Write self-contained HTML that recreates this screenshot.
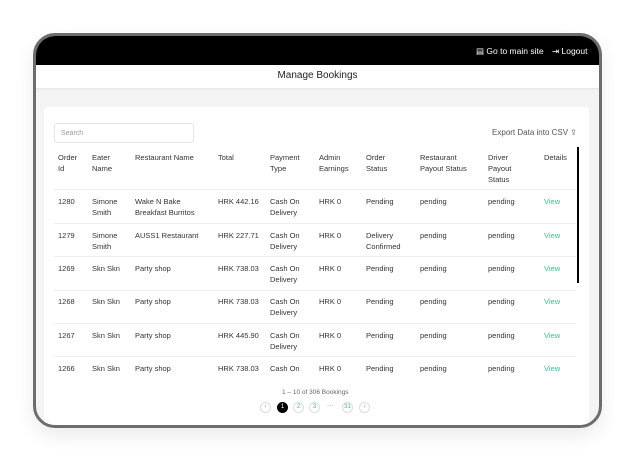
<!DOCTYPE html><html><head><style>
*{margin:0;padding:0;box-sizing:border-box}
body{width:635px;height:461px;background:#fff;font-family:"Liberation Sans",sans-serif;position:relative;overflow:hidden;color:#333}
.frame{position:absolute;left:33px;top:33px;width:569px;height:395px;border:3px solid #6d6d6d;border-radius:22px;background:#f4f4f5;overflow:hidden;box-shadow:0 8px 20px rgba(0,0,0,.08)}
.top{position:absolute;left:0;top:0;right:0;height:29px;background:#000;color:#fff;font-size:8.5px}
.top span{position:absolute;top:10px}
.title{position:absolute;left:0;right:0;top:29px;height:23px;background:#fff;font-size:10px;text-align:center;line-height:22px;color:#222;box-shadow:0 1px 2px rgba(0,0,0,.08)}
.card{position:absolute;left:8px;top:71px;width:545px;height:330px;background:#fff;border-radius:4px}
.search{position:absolute;left:10px;top:16px;width:140px;height:20px;border:1px solid #e3e3e3;border-radius:3px;font-size:7px;color:#999;padding:6px 6px}
.exp{position:absolute;right:12px;top:21px;font-size:8px;color:#555}
.c{position:absolute;font-size:7.5px;line-height:11px;color:#333}
.v{color:#3cc08f}
.ln{position:absolute;left:10px;width:522px;height:1px;background:#eee}
.sb{position:absolute;left:533px;top:40px;width:2px;height:136px;background:#000}
.pg{position:absolute;font-size:6.5px;color:#666}
.b{position:absolute;top:295px;width:11px;height:11px;border:1px solid #ddd;border-radius:50%;font-size:6px;text-align:center;line-height:9px;color:#3cc08f}
</style></head><body>
<div class="frame">
<div class="top"><span style="left:440px">▤ Go to main site</span><span style="left:516px">⇥ Logout</span></div>
<div class="title">Manage Bookings</div>
<div class="card">
<div class="search">Search</div>
<div class="exp">Export Data into CSV ⇪</div>
<div class="c" style="left:14px;top:45px">Order<br>Id</div>
<div class="c" style="left:48px;top:45px">Eater<br>Name</div>
<div class="c" style="left:91px;top:45px">Restaurant Name</div>
<div class="c" style="left:174px;top:45px">Total</div>
<div class="c" style="left:226px;top:45px">Payment<br>Type</div>
<div class="c" style="left:275px;top:45px">Admin<br>Earnings</div>
<div class="c" style="left:322px;top:45px">Order<br>Status</div>
<div class="c" style="left:376px;top:45px">Restaurant<br>Payout Status</div>
<div class="c" style="left:444px;top:45px">Driver<br>Payout<br>Status</div>
<div class="c" style="left:500px;top:45px">Details</div>
<div class="sb"></div>
<div class="ln" style="top:82px"></div>
<div class="c" style="left:14px;top:89px">1280</div><div class="c" style="left:48px;top:89px">Simone<br>Smith</div><div class="c" style="left:91px;top:89px">Wake N Bake<br>Breakfast Burritos</div><div class="c" style="left:174px;top:89px">HRK 442.16</div><div class="c" style="left:226px;top:89px">Cash On<br>Delivery</div><div class="c" style="left:275px;top:89px">HRK 0</div><div class="c" style="left:322px;top:89px">Pending</div><div class="c" style="left:376px;top:89px">pending</div><div class="c" style="left:444px;top:89px">pending</div><div class="c v" style="left:500px;top:89px">View</div>
<div class="ln" style="top:116px"></div>
<div class="c" style="left:14px;top:123px">1279</div><div class="c" style="left:48px;top:123px">Simone<br>Smith</div><div class="c" style="left:91px;top:123px">AUSS1 Restaurant</div><div class="c" style="left:174px;top:123px">HRK 227.71</div><div class="c" style="left:226px;top:123px">Cash On<br>Delivery</div><div class="c" style="left:275px;top:123px">HRK 0</div><div class="c" style="left:322px;top:123px">Delivery<br>Confirmed</div><div class="c" style="left:376px;top:123px">pending</div><div class="c" style="left:444px;top:123px">pending</div><div class="c v" style="left:500px;top:123px">View</div>
<div class="ln" style="top:149px"></div>
<div class="c" style="left:14px;top:156px">1269</div><div class="c" style="left:48px;top:156px">Skn Skn</div><div class="c" style="left:91px;top:156px">Party shop</div><div class="c" style="left:174px;top:156px">HRK 738.03</div><div class="c" style="left:226px;top:156px">Cash On<br>Delivery</div><div class="c" style="left:275px;top:156px">HRK 0</div><div class="c" style="left:322px;top:156px">Pending</div><div class="c" style="left:376px;top:156px">pending</div><div class="c" style="left:444px;top:156px">pending</div><div class="c v" style="left:500px;top:156px">View</div>
<div class="ln" style="top:183px"></div>
<div class="c" style="left:14px;top:189px">1268</div><div class="c" style="left:48px;top:189px">Skn Skn</div><div class="c" style="left:91px;top:189px">Party shop</div><div class="c" style="left:174px;top:189px">HRK 738.03</div><div class="c" style="left:226px;top:189px">Cash On<br>Delivery</div><div class="c" style="left:275px;top:189px">HRK 0</div><div class="c" style="left:322px;top:189px">Pending</div><div class="c" style="left:376px;top:189px">pending</div><div class="c" style="left:444px;top:189px">pending</div><div class="c v" style="left:500px;top:189px">View</div>
<div class="ln" style="top:216px"></div>
<div class="c" style="left:14px;top:223px">1267</div><div class="c" style="left:48px;top:223px">Skn Skn</div><div class="c" style="left:91px;top:223px">Party shop</div><div class="c" style="left:174px;top:223px">HRK 445.90</div><div class="c" style="left:226px;top:223px">Cash On<br>Delivery</div><div class="c" style="left:275px;top:223px">HRK 0</div><div class="c" style="left:322px;top:223px">Pending</div><div class="c" style="left:376px;top:223px">pending</div><div class="c" style="left:444px;top:223px">pending</div><div class="c v" style="left:500px;top:223px">View</div>
<div class="ln" style="top:249px"></div>
<div class="c" style="left:14px;top:256px">1266</div><div class="c" style="left:48px;top:256px">Skn Skn</div><div class="c" style="left:91px;top:256px">Party shop</div><div class="c" style="left:174px;top:256px">HRK 738.03</div><div class="c" style="left:226px;top:256px">Cash On</div><div class="c" style="left:275px;top:256px">HRK 0</div><div class="c" style="left:322px;top:256px">Pending</div><div class="c" style="left:376px;top:256px">pending</div><div class="c" style="left:444px;top:256px">pending</div><div class="c v" style="left:500px;top:256px">View</div>
<div class="pg" style="left:238px;top:282px">1 – 10 of 306 Bookings</div>
<div class="b" style="left:216px;color:#999">‹</div>
<div class="b" style="left:233px;background:#000;border-color:#000;color:#fff">1</div>
<div class="b" style="left:249px">2</div>
<div class="b" style="left:265px">3</div>
<div class="pg" style="left:283px;top:295px">···</div>
<div class="b" style="left:298px">31</div>
<div class="b" style="left:315px;color:#999">›</div>
</div>
</div>
</body></html>
